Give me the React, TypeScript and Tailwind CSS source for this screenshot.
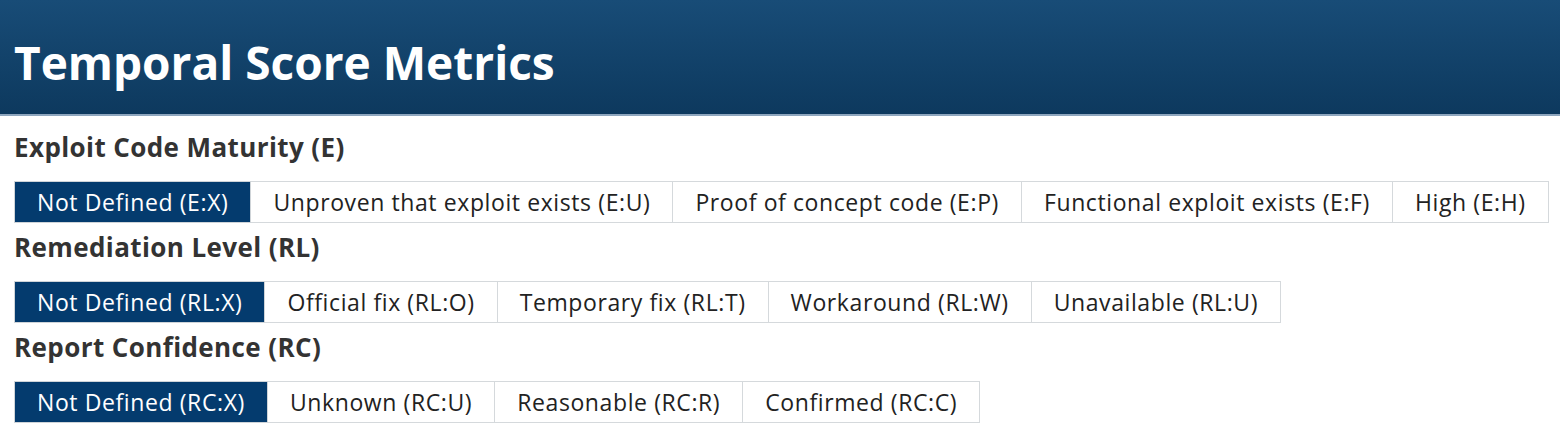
import React, { useState } from 'react';

type Metric = {
  title: string;
  options: string[];
};

const metrics: Metric[] = [
  {
    title: 'Exploit Code Maturity (E)',
    options: [
      'Not Defined (E:X)',
      'Unproven that exploit exists (E:U)',
      'Proof of concept code (E:P)',
      'Functional exploit exists (E:F)',
      'High (E:H)',
    ],
  },
  {
    title: 'Remediation Level (RL)',
    options: [
      'Not Defined (RL:X)',
      'Official fix (RL:O)',
      'Temporary fix (RL:T)',
      'Workaround (RL:W)',
      'Unavailable (RL:U)',
    ],
  },
  {
    title: 'Report Confidence (RC)',
    options: ['Not Defined (RC:X)', 'Unknown (RC:U)', 'Reasonable (RC:R)', 'Confirmed (RC:C)'],
  },
];

const MetricGroup: React.FC<{ metric: Metric }> = ({ metric }) => {
  const [selected, setSelected] = useState(0);

  return (
    <div>
      <h3 className="h-[58px] pt-[6px] text-[26px] font-bold leading-[36px] tracking-[0.4px] text-[#333333]">
        {metric.title}
      </h3>
      <div className="flex">
        {metric.options.map((opt, i) => (
          <button
            key={opt}
            onClick={() => setSelected(i)}
            className={
              i === selected
                ? 'h-[42px] shrink-0 whitespace-nowrap border border-[#cfd4d8] bg-[#043b6e] px-[22px] text-[23px] leading-[40px] tracking-[0.6px] text-white'
                : 'h-[42px] shrink-0 whitespace-nowrap border border-l-0 border-[#d5d9dc] bg-white px-[22px] text-[23px] leading-[40px] tracking-[0.6px] text-[#222222]'
            }
          >
            {opt}
          </button>
        ))}
      </div>
    </div>
  );
};

export default function App() {
  return (
    <div className="min-h-screen bg-white font-['Open_Sans','Noto_Sans',sans-serif]">
      <div className="h-[116px] border-b-2 border-[#8ea6be] bg-gradient-to-b from-[#184c77] to-[#0d395e] px-[14px] pt-[30px]">
        <h1 className="text-[46px] font-bold leading-[64px] text-white">Temporal Score Metrics</h1>
      </div>
      <div className="px-[14px] pt-[7px]">
        {metrics.map((m) => (
          <MetricGroup key={m.title} metric={m} />
        ))}
      </div>
    </div>
  );
}
